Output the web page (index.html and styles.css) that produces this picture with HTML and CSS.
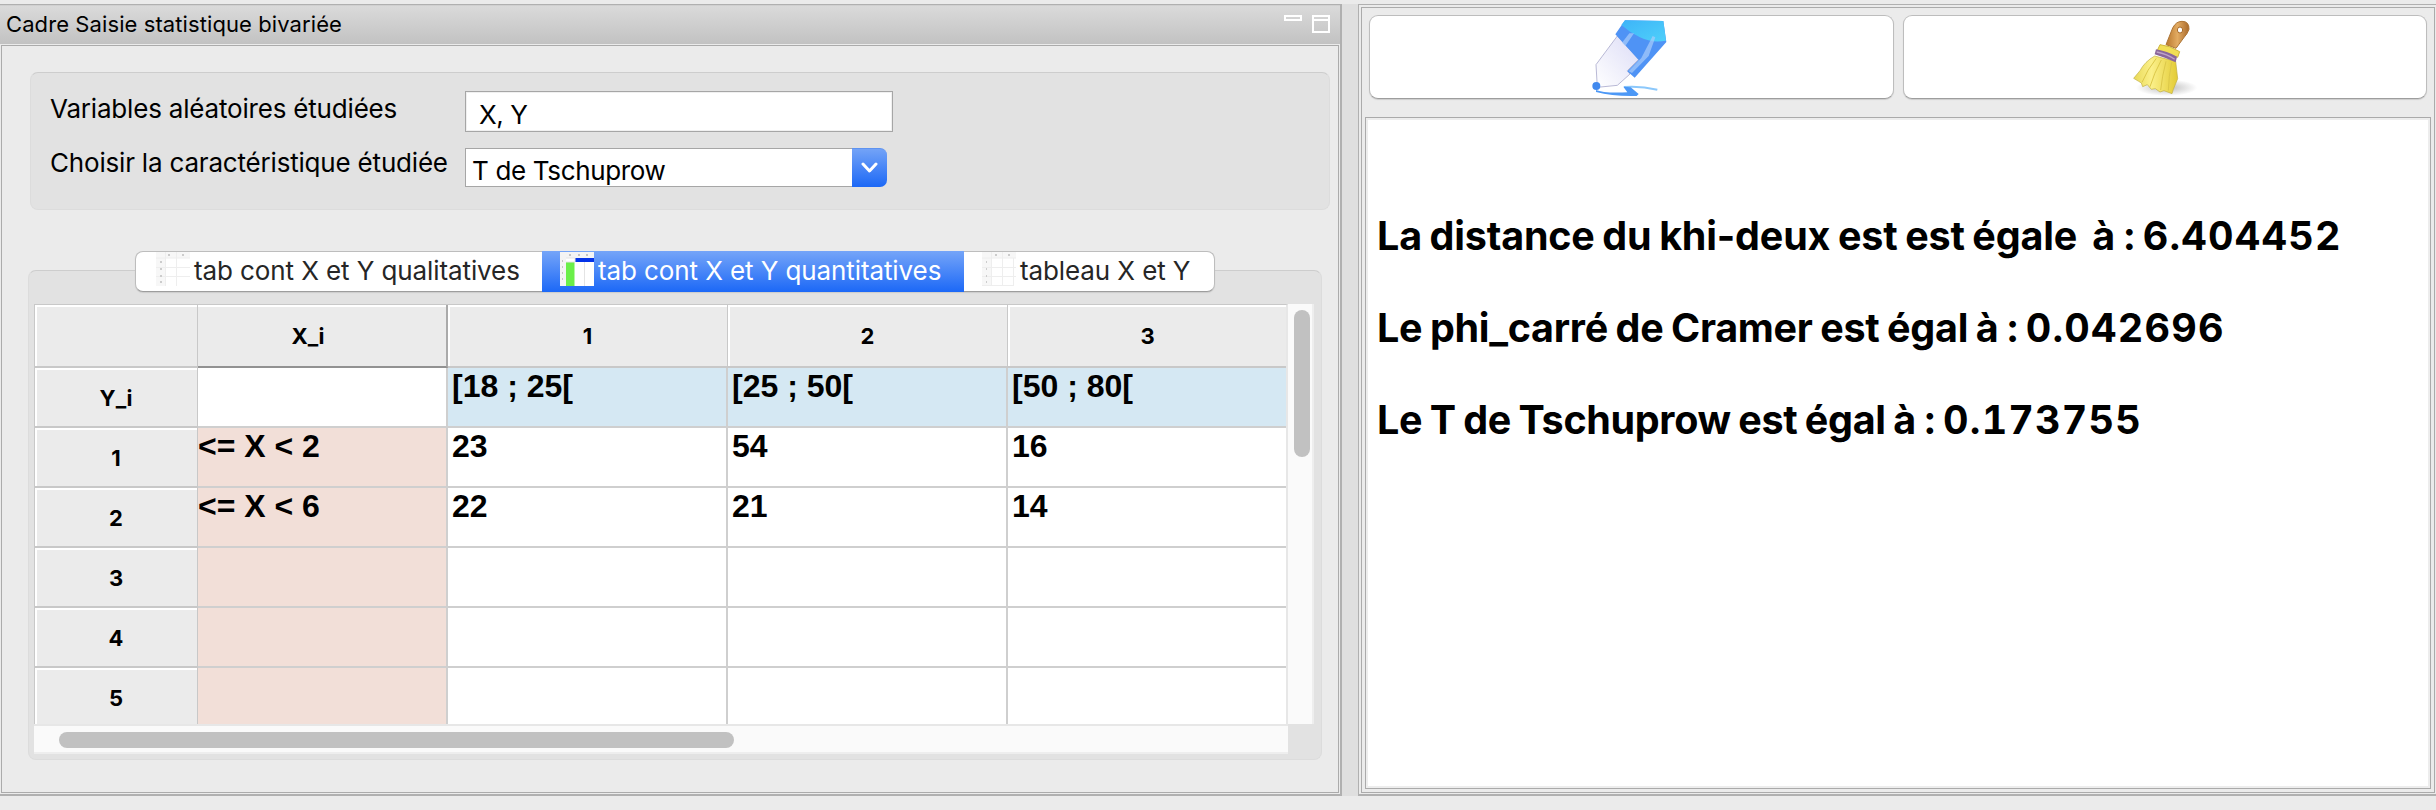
FILE: index.html
```html
<!DOCTYPE html>
<html lang="fr">
<head>
<meta charset="utf-8">
<title>Saisie statistique bivariée</title>
<link rel="stylesheet" href="styles.css">
</head>
<body>
<main class="desktop">
  <section class="window input-window">
    <header class="titlebar">
      <span class="title">Cadre Saisie statistique bivariée</span>
      <svg class="controls" width="48" height="20" viewBox="0 0 48 20" fill="none" stroke="#fff" stroke-width="2"><path d="M1 1h16v4H1zM29 1h16v16H29zM29 5h16"/></svg>
    </header>
    <div class="content">
      <form class="group">
        <label class="label">Variables aléatoires étudiées</label>
        <div class="field">X, Y</div>
        <label class="label label-carac">Choisir la caractéristique étudiée</label>
        <div class="combo">
          <div class="combo-text">T de Tschuprow</div>
          <div class="combo-button"><svg width="17" height="12" viewBox="0 0 17 12" fill="none" stroke="#fff" stroke-width="3" stroke-linecap="round" stroke-linejoin="round"><path d="M2 2l6.500 7L15 2"/></svg></div>
        </div>
      </form>
      <div class="tabbed">
        <nav class="tabs">
          <div class="tab tab-a">
            <svg width="34" height="34" viewBox="0 0 34 34"><path fill="#f7f7f7" d="M0 0h34v34H0z"/><path fill="#fff" d="M9 6h25v28H9z"/><path stroke="#eee" d="M0 6h34M0 15.500h34M0 24.500h34M9.500 0v34M20.500 0v34" fill="none"/><path fill="#ccc" d="M12 2h2v2h-2zM26 2h2v2h-2zM4 9h2v2H4zM4 16h2v2H4zM4 23h2v2H4zM4 29h2v2H4z"/></svg>
            <span>tab cont X et Y qualitatives</span>
          </div>
          <div class="tab tab-b">
            <svg width="34" height="34" viewBox="0 0 34 34"><path fill="#f4f4f4" d="M0 0h34v34H0z"/><path fill="#fff" d="M6 6h28v28H6z"/><path fill="#6bef49" d="M6 10h8.500v24H6z"/><path fill="#0433e8" d="M15 6h19v4H15z"/><path stroke="#e4e4e4" d="M6 6h9v4H6M24.500 10v24" fill="none"/><path fill="#c4c4c4" d="M9 2h2v2H9zM18 2h2v2h-2zM26 2h2v2h-2zM2 8h1v2H2zM2 14h1v2H2zM2 20h1v2H2zM2 26h1v2H2z"/></svg>
            <span>tab cont X et Y quantitatives</span>
          </div>
          <div class="tab tab-c">
            <svg width="34" height="34" viewBox="0 0 34 34"><path fill="#f7f7f7" d="M0 0h34v6H9v28H0z"/><path stroke="#eee" d="M0 6h34M0 15.500h34M0 24.500h34M0 33.500h32M9.500 0v34M20.500 0v34M31.500 6v28" fill="none"/><path fill="#ccc" d="M13 2h2v2h-2zM26 2h2v2h-2zM4 9h1v2H4zM4 16h1v2H4zM4 23h1v2H4zM4 29h1v2H4z"/></svg>
            <span>tableau X et Y</span>
          </div>
        </nav>
        <div class="grid-pane">
          <div class="sheet">
            <div class="th"></div><div class="th pressed">X_i</div><div class="th">1</div><div class="th">2</div><div class="th">3</div>
            <div class="rh">Y_i</div><div class="td"></div><div class="td blue">[18 ; 25[</div><div class="td blue">[25 ; 50[</div><div class="td blue">[50 ; 80[</div>
            <div class="rh">1</div><div class="td pink">&lt;= X &lt; 2</div><div class="td">23</div><div class="td">54</div><div class="td">16</div>
            <div class="rh">2</div><div class="td pink">&lt;= X &lt; 6</div><div class="td">22</div><div class="td">21</div><div class="td">14</div>
            <div class="rh">3</div><div class="td pink"></div><div class="td"></div><div class="td"></div><div class="td"></div>
            <div class="rh">4</div><div class="td pink"></div><div class="td"></div><div class="td"></div><div class="td"></div>
            <div class="rh">5</div><div class="td pink"></div><div class="td"></div><div class="td"></div><div class="td"></div>
          </div>
          <div class="vbar"><div class="vthumb"></div></div>
          <div class="hbar"><div class="hthumb"></div></div>
        </div>
      </div>
    </div>
  </section>
  <section class="window result-window">
    <div class="result-frame">
      <div class="toolbar">
        <button class="tool" type="button" aria-label="Écrire">
          <svg width="80" height="80" viewBox="153 51 240 240">
            <defs>
              <linearGradient id="nib" x1="0" y1="1" x2="1" y2="0"><stop offset="0" stop-color="#fff"/><stop offset="1" stop-color="#dcdcf6"/></linearGradient>
              <linearGradient id="cap" x1="0" y1="0" x2="1" y2="1"><stop offset="0" stop-color="#3db4f8"/><stop offset="1" stop-color="#4fd0fa"/></linearGradient>
            </defs>
            <path d="M232 108L296 178 262 212 270 222 232 256 172 262 168 194z" fill="url(#nib)" stroke="#b9b9d6" stroke-width="3"/>
            <path d="M255 61L370 63 379 126 284 233 262 214 296 180 226 103z" fill="#4f93f5"/>
            <path d="M255 61L370 63 378 122Q335 130 300 112 270 98 244 75z" fill="url(#cap)"/>
            <path d="M246 128L268 100 282 100 256 138zM266 214L304 174 338 108 346 112 326 168 276 219z" fill="#a9ccfb" opacity=".7"/>
            <circle cx="169" cy="258" r="12" fill="#4189ee"/>
            <path d="M252 261Q300 257 352 269" fill="none" stroke="#8cc8fb" stroke-width="6"/>
            <path d="M168 270Q190 280 262 277L250 260 272 262 296 282 290 288Q220 290 168 276z" fill="#4c98f6"/>
          </svg>
        </button>
        <button class="tool" type="button" aria-label="Effacer">
          <svg width="80" height="80" viewBox="135 51 240 240">
            <defs>
              <linearGradient id="straw"><stop offset="0" stop-color="#e9d957"/><stop offset=".4" stop-color="#fbf08a"/><stop offset="1" stop-color="#e3cb35"/></linearGradient>
              <linearGradient id="wood"><stop offset="0" stop-color="#b9772c"/><stop offset=".5" stop-color="#e2ab62"/><stop offset="1" stop-color="#a9692a"/></linearGradient>
              <radialGradient id="shade"><stop offset="0" stop-color="#bbb"/><stop offset="1" stop-color="#fff"/></radialGradient>
            </defs>
            <ellipse cx="260" cy="263" rx="92" ry="25" fill="url(#shade)"/>
            <path d="M258 134L278 84Q288 64 306 64 328 64 327 88 322 102 313 111L288 145z" fill="url(#wood)" stroke="#ad7434" stroke-width="3"/>
            <ellipse cx="300" cy="90" rx="8" ry="9" fill="#fff" stroke="#a96d2c" stroke-width="3"/>
            <path d="M240 134Q268 136 299 155L293 172 232 151z" fill="#f1df55" stroke="#d0b83d" stroke-width="3"/>
            <path d="M224 168Q194 185 180 212L161 235 176 244 184 249 188 260 202 254 214 268 226 266 240 276 252 272 276 281 280 268 293 236 287 184z" fill="url(#straw)" stroke="#c0ad42" stroke-width="2"/>
            <path d="M229 175Q201 210 186 247M244 180Q222 220 210 260M258 184Q246 230 242 270M275 187Q266 230 265 272" fill="none" stroke="#dcc84a" stroke-width="3"/>
            <path d="M228 148Q261 154 291 170L287 187Q256 173 224 163z" fill="#8a669b"/>
            <path d="M230 156Q262 162 284 178" fill="none" stroke="#bea3c9" stroke-width="4"/>
          </svg>
        </button>
      </div>
      <div class="output">
        <p class="line1"><span>La distance du khi-deux est est égale&nbsp; à :</span><span class="num">6.404452</span></p>
        <p class="line2"><span>Le phi_carré de Cramer est égal à :</span><span class="num">0.042696</span></p>
        <p class="line3"><span>Le T de Tschuprow est égal à :</span><span class="num">0.173755</span></p>
      </div>
    </div>
  </section>
</main>
</body>
</html>
```
FILE: styles.css
```css
* { box-sizing: border-box; }
body { margin: 0; padding-top: 4px; background: #ebebeb; color: #000; font-family: Inter, "Liberation Sans", sans-serif; overflow: hidden; }
svg { display: block; flex: none; }

.desktop { display: flex; gap: 16px; height: 792px; background: #dfdfdf; white-space: nowrap; }
.window { display: flex; flex-direction: column; background: #ebebeb; flex: none; }

.input-window { width: 1342px; border: solid #b0b0b0; border-width: 1px 2px 2px 0; }
.titlebar { height: 39px; display: flex; justify-content: space-between; padding: 0 8px 0 6px; background: linear-gradient(#dadada, #c2c2c2); border-top: 1px solid #d0d0d0; }
.title { font-size: 22px; line-height: 37px; letter-spacing: .09px; }
.controls { margin-top: 9px; }
.content { flex: 1; margin: 1px; border: 1px solid #ababab; padding: 26px 7px 0 26px; }

.group { display: grid; grid-template-columns: 415px 428px; grid-template-rows: 41px 39px; row-gap: 16px; margin-left: 2px; width: 1300px; height: 138px; padding: 18px 0 0 19px; background: #e2e2e2; border: 1px solid #dcdcdc; border-top-color: #cdcdcd; border-radius: 8px; font-size: 26px; }
.label { line-height: 36px; letter-spacing: -.19px; }
.label-carac { line-height: 30px; }
.field { background: #fff; border: 1px solid #a6a6a6; box-shadow: inset 0 0 0 1px #f0f0f0; padding-left: 13px; line-height: 46px; letter-spacing: -.4px; }
.combo { display: flex; width: 422px; }
.combo-text { flex: 1; background: #fff; border: 1px solid #a6a6a6; border-right: 0; padding-left: 6px; line-height: 44px; letter-spacing: -.35px; }
.combo-button { width: 35px; display: grid; place-items: center; border-radius: 0 7px 7px 0; background: linear-gradient(#73a3f7, #1c68f6); border-top: 1px solid #5f93f0; }

.tabbed { position: relative; margin-top: 60px; width: 1294px; height: 490px; background: #e2e2e2; border: 1px solid #dcdcdc; border-top-color: #cdcdcd; border-radius: 8px; padding: 33px 0 0 5px; }
.tabs { position: absolute; left: 106px; top: -20px; display: flex; height: 41px; width: 1080px; border: 1px solid #bdbdbd; border-bottom-color: #9d9d9d; border-radius: 8px; background: #fff; color: #262626; font-size: 26px; line-height: 37px; letter-spacing: -.1px; box-shadow: 0 1px 1px #ccc; }
.tab { display: flex; gap: 4px; }
.tab-a { width: 406px; padding-left: 20px; }
.tab-b { width: 422px; margin: -1px 0; padding: 1px 0 0 18px; background: linear-gradient(#75a5f8, #1c68f7); color: #fff; }
.tab-c { padding-left: 18px; }

.grid-pane { display: grid; grid-template-columns: 1254px 26px; grid-template-rows: 420px 30px; width: 1280px; }
.sheet { display: grid; grid-template-columns: 164px 250px 280px 280px 280px; grid-template-rows: 63px repeat(6, 60px); width: 1254px; height: 420px; overflow: hidden; border-right: 2px solid #e7e7e7; border-top: 1px solid #c8c8c8; background: #fff; }
.th, .rh { background: #ebebeb; display: grid; place-items: center; font-size: 22px; font-weight: 700; border: solid #c8c8c8; border-width: 0 1px 2px 0; box-shadow: inset 2px 2px #fff; line-height: 26px; }
.rh { border-left-width: 1px; padding-top: 2px; }
.th:first-child { border-left-width: 1px; }
.pressed { border-right: 2px solid #aaa; border-bottom: 2px solid #929292; padding-right: 28px; box-shadow: inset 0 2px #fff; }
.td { border: solid #cfcfcf; border-width: 0 2px 2px 0; font: 700 32px/36px "Liberation Sans", Arial, sans-serif; padding-left: 4px; }
.td.pink { background: #f2dfd8; padding-left: 0; }
.td.blue { background: #d5e8f3; }
.vbar { background: #fafafa; border-right: 2px solid #eee; padding: 6px 0 0 6px; }
.vthumb { width: 16px; height: 147px; border-radius: 8px; background: #c1c1c1; }
.hbar { background: #fafafa; border-top: 2px solid #e7e7e7; border-bottom: 2px solid #eee; padding: 6px 0 0 25px; }
.hthumb { width: 675px; height: 16px; border-radius: 8px; background: #c1c1c1; }

.result-window { width: 1080px; border: 1px solid #b0b0b0; border-bottom-width: 2px; padding: 2px 2px 1px; }
.result-frame { flex: 1; display: flex; flex-direction: column; width: 1074px; border: 1px solid #ababab; padding: 7px 3px 3px; }
.toolbar { display: flex; gap: 9px; height: 84px; margin: 0 4px; }
.tool { flex: 1; display: grid; place-items: center; background: #fff; border: 1px solid #bdbdbd; border-bottom-color: #9d9d9d; border-radius: 9px; padding: 0; box-shadow: 0 1px 1px #ccc; }
.output { flex: 1; margin-top: 18px; border: 1px solid #aaa; background: #fff; box-shadow: inset 0 0 0 2px #ededed; padding: 72px 0 0 11px; }
.output p { display: flex; gap: 7px; margin: 0; height: 92px; line-height: 92px; font-size: 39.5px; font-weight: 700; letter-spacing: -.19px; word-spacing: -1.5px; }
.output .line2 { letter-spacing: -.28px; }
.output .line3 { letter-spacing: -.34px; }
.output .num { font-variant-numeric: tabular-nums; letter-spacing: 1.2px; }
```
